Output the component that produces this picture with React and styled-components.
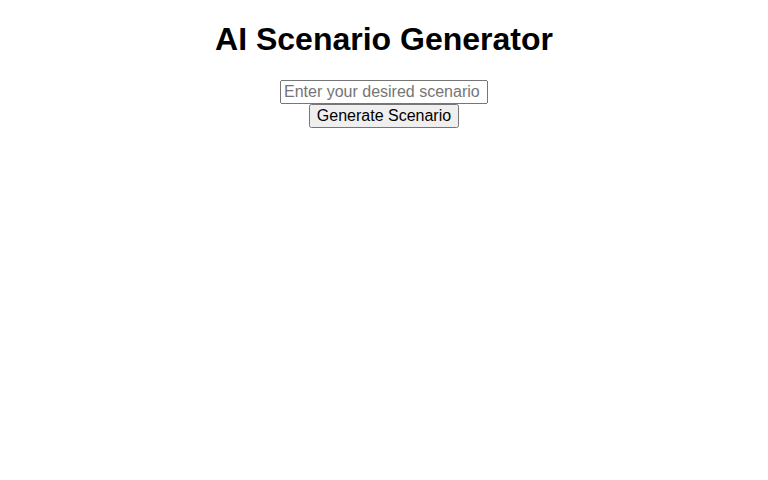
import React, { useState } from 'react';
import styled, { createGlobalStyle } from 'styled-components';

const GlobalStyle = createGlobalStyle`
  body {
    margin: 0;
    font-family: 'Liberation Sans', Arial, sans-serif;
    background: #fff;
    color: #000;
  }
`;

const Page = styled.div`
  text-align: center;
  padding: 0 8px;
`;

const Title = styled.h1`
  font-size: 32px;
  font-weight: bold;
  margin: 21.44px 0;
`;

const PromptInput = styled.input`
  font-family: 'Liberation Sans', Arial, sans-serif;
  font-size: 16px;
  box-sizing: border-box;
  width: 208px;
`;

const GenerateButton = styled.button`
  font-family: 'Liberation Sans', Arial, sans-serif;
  font-size: 16px;
`;

const App = () => {
  const [prompt, setPrompt] = useState('');

  return (
    <Page>
      <GlobalStyle />
      <Title>AI Scenario Generator</Title>
      <PromptInput
        type="text"
        placeholder="Enter your desired scenario"
        value={prompt}
        onChange={(e) => setPrompt(e.target.value)}
      />
      <br />
      <GenerateButton>Generate Scenario</GenerateButton>
    </Page>
  );
};

export default App;
